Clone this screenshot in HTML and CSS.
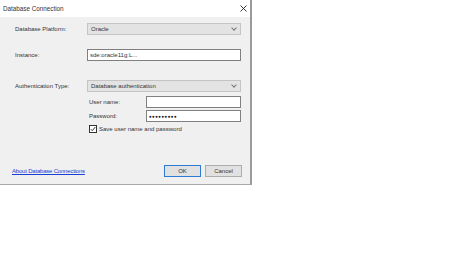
FILE: index.html
```html
<!doctype html>
<html lang="en">
<head>
    <meta charset="utf-8" />
    <title>Database Connection</title>
    <link rel="stylesheet" href="styles.css">
</head>
<body>
    <div class="dialog">
        <div class="titlebar">
            <span class="title">Database Connection</span>
            <svg class="close" width="7" height="7" viewBox="0 0 7 7">
                <path d="M0.5 0.5 L6.5 6.5 M6.5 0.5 L0.5 6.5" stroke="#222" stroke-width="0.9" fill="none" />
            </svg>
        </div>

        <div class="content">
            <div class="row first">
                <label class="lbl">Database Platform:</label>
                <div class="select">Oracle<span class="arrow"></span></div>
            </div>

            <div class="row instance">
                <label class="lbl">Instance:</label>
                <div class="input">sde:oracle11g:L...</div>
            </div>

            <div class="row auth">
                <label class="lbl">Authentication Type:</label>
                <div class="select">Database authentication<span class="arrow"></span></div>
            </div>

            <div class="sub">
                <div class="subrow">
                    <label class="sublbl">User name:</label>
                    <div class="input short"></div>
                </div>
                <div class="subrow">
                    <label class="sublbl">Password:</label>
                    <div class="input short dots">●●●●●●●●●</div>
                </div>
                <label class="check">
                    <svg width="8" height="8" viewBox="0 0 8 8">
                        <rect x="0.5" y="0.5" width="7" height="7" fill="#fff" stroke="#333" stroke-width="1" />
                        <path d="M1.8 4.2 L3.3 5.7 L6.3 2" stroke="#222" stroke-width="0.9" fill="none" />
                    </svg>
                    Save user name and password
                </label>
            </div>

            <div class="footer">
                <a href="#" class="link">About Database Connections</a>
                <div class="buttons">
                    <button class="btn default">OK</button>
                    <button class="btn">Cancel</button>
                </div>
            </div>
        </div>
    </div>
</body>
</html>
```

FILE: styles.css
```css
body { margin:0; background:#fff; font-family:"Liberation Sans", Arial, sans-serif; font-size:6px; color:#333; }
.dialog { width:250px; height:184px; border-right:2px solid #9a9a9a; border-bottom:1px solid #a8a8a8; background:#f0f0f0; display:flex; flex-direction:column; }
.titlebar { height:17px; background:#fff; display:flex; align-items:center; justify-content:space-between; padding:0 3px 0 3px; flex:none; }
.title { font-size:6.3px; color:#333; }
.content { flex:1; display:flex; flex-direction:column; padding:6px 9px 0 15px; }
.row { display:flex; align-items:center; height:12px; }
.instance { margin-top:14px; }
.auth { margin-top:19px; }
.lbl { width:72px; flex:none; }
.select { flex:1; height:12px; box-sizing:border-box; background:#e3e3e3; border:1px solid #c4c4c4; padding-left:3px; display:flex; align-items:center; justify-content:space-between; }
.arrow { width:3px; height:3px; border-right:1px solid #777; border-bottom:1px solid #777; transform:rotate(45deg); margin:0 4px 2px 0; }
.input { flex:1; height:12px; box-sizing:border-box; background:#fff; border:1px solid #7f7f7f; padding-left:2px; display:flex; align-items:center; }
.sub { margin-top:4px; margin-left:74px; display:flex; flex-direction:column; gap:2px; }
.subrow { display:flex; align-items:center; height:12px; }
.sublbl { width:57px; flex:none; }
.short { width:95px; flex:none; }
.dots { font-size:4.5px; letter-spacing:0.4px; color:#111; }
.check { display:flex; align-items:center; gap:2px; height:10px; }
.footer { margin-top:auto; margin-bottom:7px; display:flex; align-items:center; justify-content:space-between; margin-left:-3px; margin-right:-1px; }
.link { color:#1a3fd4; text-decoration:underline; letter-spacing:-0.2px; }
.buttons { display:flex; gap:4px; }
.btn { width:37px; height:12px; box-sizing:border-box; background:#e1e1e1; border:1px solid #adadad; font:inherit; padding:0; color:#333; }
.btn.default { border-color:#2b7bd6; }
```
